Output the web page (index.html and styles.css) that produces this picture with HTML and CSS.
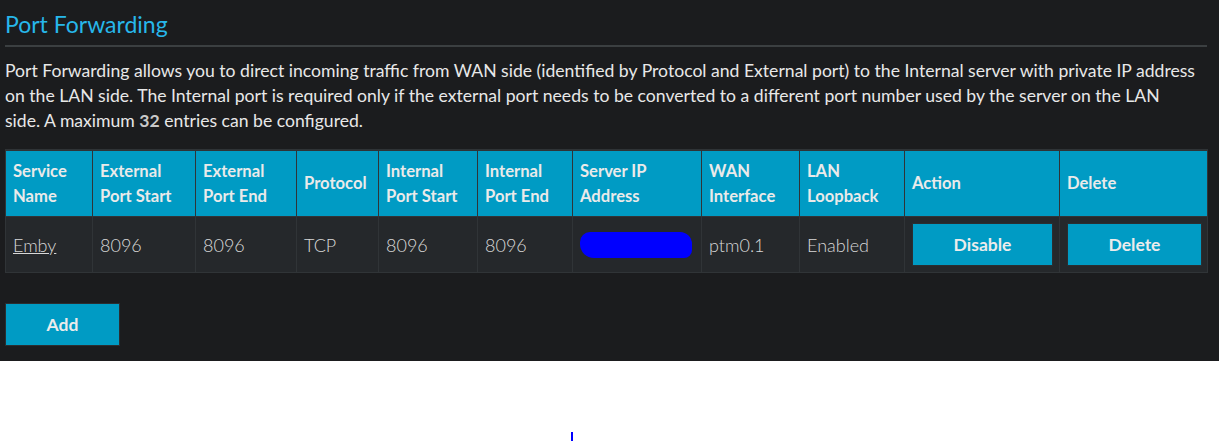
FILE: index.html
```html
<!DOCTYPE html>
<html>
<head>
<meta charset="utf-8">
<link rel="stylesheet" href="styles.css">
</head>
<body>
<div class="panel">
  <h1 class="title">Port Forwarding</h1>
  <div class="rule"></div>
  <p class="desc">Port Forwarding allows you to direct incoming traffic from WAN side (identified by Protocol and External port) to the Internal server with private IP address on the LAN side. The Internal port is required only if the external port needs to be converted to a different port number used by the server on the LAN <span class="nowrap">side. A</span> maximum <b>32</b> entries can be configured.</p>
  <table class="grid">
    <colgroup>
      <col style="width:87px"><col style="width:103px"><col style="width:101px"><col style="width:82px"><col style="width:99px"><col style="width:95px"><col style="width:129px"><col style="width:98px"><col style="width:105px"><col style="width:155px"><col style="width:148px">
    </colgroup>
    <thead>
      <tr>
        <th>Service<br>Name</th>
        <th>External<br>Port Start</th>
        <th>External<br>Port End</th>
        <th>Protocol</th>
        <th>Internal<br>Port Start</th>
        <th>Internal<br>Port End</th>
        <th>Server IP<br>Address</th>
        <th>WAN<br>Interface</th>
        <th>LAN<br>Loopback</th>
        <th>Action</th>
        <th>Delete</th>
      </tr>
    </thead>
    <tbody>
      <tr>
        <td><a class="link" href="#">Emby</a></td>
        <td>8096</td>
        <td>8096</td>
        <td>TCP</td>
        <td>8096</td>
        <td>8096</td>
        <td><span class="redact"></span></td>
        <td>ptm0.1</td>
        <td>Enabled</td>
        <td class="btncell"><button class="btn wide">Disable</button></td>
        <td class="btncell"><button class="btn wide2">Delete</button></td>
      </tr>
    </tbody>
  </table>
  <button class="btn add">Add</button>
</div>
<div class="below"><span class="caret"></span></div>
</body>
</html>
```
FILE: styles.css
```css
html, body {
  margin: 0;
  padding: 0;
  background: #ffffff;
}
body {
  font-family: Lato, "Noto Sans", sans-serif;
}
.panel {
  background: #1b1c1e;
  height: 361px;
  padding: 0 12px 0 5px;
  box-sizing: border-box;
  overflow: hidden;
}
.title {
  margin: 0;
  padding-top: 9px;
  font-size: 23px;
  line-height: 30px;
  font-weight: 400;
  color: #27b7ea;
}
.rule {
  margin-top: 6px;
  height: 2px;
  background: #3b3f41;
}
.desc {
  margin: 11px 0 0 0;
  font-size: 17.6px;
  line-height: 25px;
  color: #e8e8e8;
  font-weight: 400;
}
.nowrap {
  white-space: nowrap;
}
.desc b {
  color: #c9c9c9;
  font-weight: 700;
}
.grid {
  margin-top: 16px;
  border-collapse: collapse;
  table-layout: fixed;
  width: 1202px;
  border-top: 2px solid #2f3336;
}
.grid th, .grid td {
  border: 1px solid #303437;
  text-align: left;
  vertical-align: middle;
  padding: 0 7px;
}
.grid th {
  background: #009bc4;
  color: #eaeaea;
  font-weight: 700;
  font-size: 16.6px;
  line-height: 25px;
  height: 65px;
}
.grid td {
  background: #25282b;
  color: #d8d8d8;
  font-size: 18px;
  height: 55px;
  font-weight: 300;
}
.link {
  color: #d8d8d8;
  text-decoration: underline;
}
.redact {
  display: block;
  width: 112px;
  height: 26px;
  background: #0000ff;
  border-radius: 10px 12px 8px 14px;
}
.btncell {
  padding: 0 7px;
}
.btn {
  background: #009bc4;
  color: #ececec;
  font-family: Lato, "Noto Sans", sans-serif;
  font-weight: 700;
  font-size: 17.5px;
  border: 1px solid #2a2e31;
  cursor: pointer;
}
.wide {
  width: 141px;
  height: 43px;
}
.wide2 {
  width: 135px;
  height: 43px;
}
.add {
  display: block;
  margin-top: 30px;
  width: 115px;
  height: 43px;
}
.below {
  height: 80px;
  position: relative;
}
.caret {
  position: absolute;
  left: 571px;
  top: 71px;
  width: 2px;
  height: 9px;
  background: #0000ff;
}
```
